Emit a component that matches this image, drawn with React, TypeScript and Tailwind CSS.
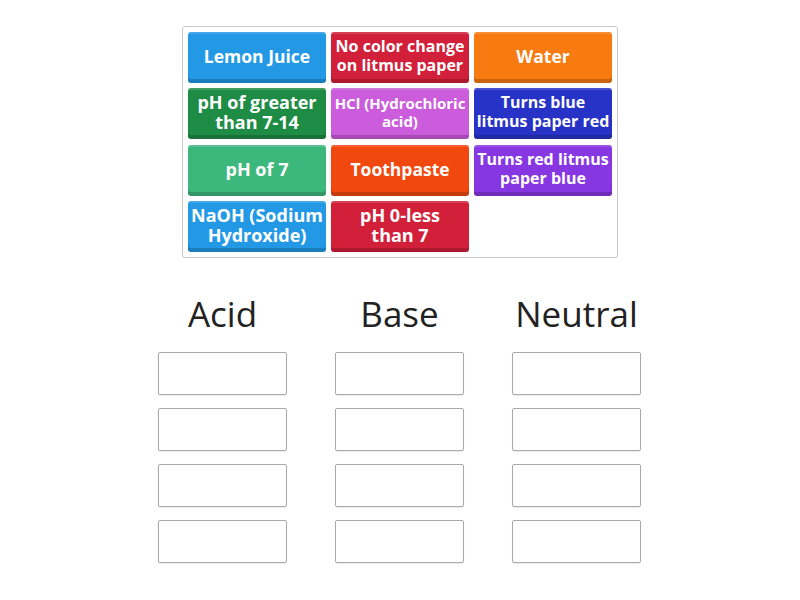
const tiles = [
  { text: 'Lemon Juice', bg: 'bg-[#2399e6]', size: 'text-[17.5px] leading-[20px]' },
  { text: 'No color change on litmus paper', bg: 'bg-[#d21f3a]', size: 'text-[16px] leading-[19px]' },
  { text: 'Water', bg: 'bg-[#f87b12]', size: 'text-[17.5px] leading-[20px]' },
  { text: 'pH of greater than 7-14', bg: 'bg-[#1f8c46]', size: 'text-[18px] leading-[20px]' },
  { text: 'HCl (Hydrochloric acid)', bg: 'bg-[#cb5cdb]', size: 'text-[15px] leading-[18px]' },
  { text: 'Turns blue litmus paper red', bg: 'bg-[#2733c6]', size: 'text-[16px] leading-[19px]' },
  { text: 'pH of 7', bg: 'bg-[#3db87d]', size: 'text-[18px] leading-[20px]' },
  { text: 'Toothpaste', bg: 'bg-[#f1480f]', size: 'text-[17.5px] leading-[20px]' },
  { text: 'Turns red litmus paper blue', bg: 'bg-[#8737e2]', size: 'text-[16px] leading-[19px]' },
  { text: 'NaOH (Sodium Hydroxide)', bg: 'bg-[#2399e6]', size: 'text-[18px] leading-[20px]' },
  { text: 'pH 0-less\nthan 7', bg: 'bg-[#d21f3a]', size: 'text-[18px] leading-[20px]' },
]

const groups = ['Acid', 'Base', 'Neutral']

const Tile = ({ text, bg, size }: { text: string; bg: string; size: string }) => (
  <div
    className={`${bg} ${size} h-[51px] rounded-[3px] flex items-center justify-center text-center whitespace-pre-line px-[2px] pb-[3px] font-bold text-white shadow-[inset_0_-4px_0_rgba(0,0,0,0.18),inset_0_2px_0_rgba(255,255,255,0.15)]`}
  >
    {text}
  </div>
)

export default function App() {
  return (
    <div className="w-[800px] h-[600px] bg-white flex flex-col items-center font-['Open_Sans',sans-serif]">
      <div className="mt-[26px] w-[436px] border border-[#c9c9c9] rounded-[3px] p-[5px] grid grid-cols-3 gap-x-[5px] gap-y-[5.33px]">
        {tiles.map((t) => (
          <Tile key={t.text} {...t} />
        ))}
      </div>

      <div className="mt-[33px] mr-[1px] grid grid-cols-[129px_129px_129px] gap-x-[48px]">
        {groups.map((g) => (
          <div key={g} className="flex flex-col items-center">
            <h2 className="h-[46px] leading-[46px] text-[35px] text-[#222] whitespace-nowrap">{g}</h2>
            <div className="mt-[15px] flex flex-col gap-[13px] w-full">
              {[0, 1, 2, 3].map((i) => (
                <div
                  key={i}
                  className="h-[43px] w-full bg-white border border-[#a9a9a9] rounded-[2px] shadow-[0_1px_1px_rgba(0,0,0,0.08)]"
                />
              ))}
            </div>
          </div>
        ))}
      </div>
    </div>
  )
}
